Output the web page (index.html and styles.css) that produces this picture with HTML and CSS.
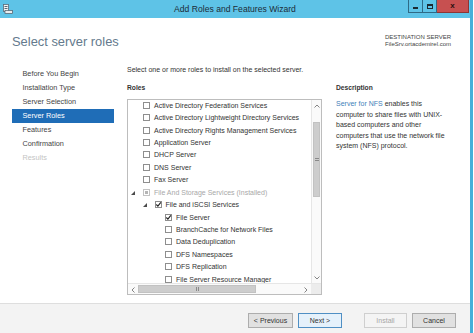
FILE: index.html
```html
<!DOCTYPE html>
<html lang="en">
<head>
    <meta charset="UTF-8">
    <title>Add Roles and Features Wizard</title>
    <link rel="stylesheet" href="styles.css">
</head>
<body>
    <div class="window">
        <div class="titlebar">
            <div class="tb-left">
                <svg class="app-icon" width="10" height="10" viewBox="0 0 10 10">
                    <rect x="0.5" y="0.5" width="5" height="7" fill="#f4f4f4" stroke="#5a6b78" stroke-width="0.8"/>
                    <rect x="1.5" y="2" width="3" height="1" fill="#5a6b78"/>
                    <rect x="1.5" y="4" width="3" height="1" fill="#5a6b78"/>
                    <rect x="2" y="6.5" width="7.5" height="3" fill="#e9edf0" stroke="#4a5a66" stroke-width="0.7"/>
                </svg>
            </div>
            <div class="title">Add Roles and Features Wizard</div>
            <div class="caption-buttons">
                <span class="cap cap-min"><i></i></span>
                <span class="cap cap-max"><i></i></span>
                <span class="cap cap-close">x</span>
            </div>
        </div>

        <div class="header">
            <h1>Select server roles</h1>
            <div class="dest">
                <div>DESTINATION SERVER</div>
                <div>FileSrv.ortacdemirel.com</div>
            </div>
        </div>

        <div class="main">
            <ul class="steps">
                <li>Before You Begin</li>
                <li>Installation Type</li>
                <li>Server Selection</li>
                <li class="active">Server Roles</li>
                <li>Features</li>
                <li>Confirmation</li>
                <li class="disabled">Results</li>
            </ul>

            <div class="content">
                <p class="intro">Select one or more roles to install on the selected server.</p>
                <div class="columns">
                    <div class="roles">
                        <div class="label">Roles</div>
                        <div class="listbox">
                            <div class="list-area">
                                <div class="rows">
                                    <div class="row first"><span class="exp"></span><span class="cb"></span>Active Directory Federation Services</div>
                                    <div class="row"><span class="exp"></span><span class="cb"></span>Active Directory Lightweight Directory Services</div>
                                    <div class="row"><span class="exp"></span><span class="cb"></span>Active Directory Rights Management Services</div>
                                    <div class="row"><span class="exp"></span><span class="cb"></span>Application Server</div>
                                    <div class="row"><span class="exp"></span><span class="cb"></span>DHCP Server</div>
                                    <div class="row"><span class="exp"></span><span class="cb"></span>DNS Server</div>
                                    <div class="row"><span class="exp"></span><span class="cb"></span>Fax Server</div>
                                    <div class="row grayed"><span class="exp open"></span><span class="cb partial"></span>File And Storage Services (Installed)</div>
                                    <div class="row lvl2"><span class="exp open"></span><span class="cb checked"><svg width="7" height="7" viewBox="0 0 7 7"><polyline points="1.3,3.5 2.9,5.1 5.8,1.4" fill="none" stroke="#222" stroke-width="1.1"/></svg></span>File and iSCSI Services</div>
                                    <div class="row lvl3"><span class="exp"></span><span class="cb checked"><svg width="7" height="7" viewBox="0 0 7 7"><polyline points="1.3,3.5 2.9,5.1 5.8,1.4" fill="none" stroke="#222" stroke-width="1.1"/></svg></span>File Server</div>
                                    <div class="row lvl3"><span class="exp"></span><span class="cb"></span>BranchCache for Network Files</div>
                                    <div class="row lvl3"><span class="exp"></span><span class="cb"></span>Data Deduplication</div>
                                    <div class="row lvl3"><span class="exp"></span><span class="cb"></span>DFS Namespaces</div>
                                    <div class="row lvl3"><span class="exp"></span><span class="cb"></span>DFS Replication</div>
                                    <div class="row lvl3"><span class="exp"></span><span class="cb"></span>File Server Resource Manager</div>
                                </div>
                                <div class="vscroll">
                                    <div class="sb-arrow">
                                        <svg width="6" height="4" viewBox="0 0 6 4"><polyline points="0.5,3.5 3,1 5.5,3.5" fill="none" stroke="#777" stroke-width="0.9"/></svg>
                                    </div>
                                    <div class="sb-track">
                                        <div class="sb-thumb vthumb"><span class="grip"></span></div>
                                    </div>
                                    <div class="sb-arrow">
                                        <svg width="6" height="4" viewBox="0 0 6 4"><polyline points="0.5,0.5 3,3 5.5,0.5" fill="none" stroke="#777" stroke-width="0.9"/></svg>
                                    </div>
                                </div>
                            </div>
                            <div class="hscroll">
                                <div class="sb-arrow">
                                    <svg width="4" height="6" viewBox="0 0 4 6"><polyline points="3.5,0.5 1,3 3.5,5.5" fill="none" stroke="#777" stroke-width="0.9"/></svg>
                                </div>
                                <div class="sb-track htrack">
                                    <div class="sb-thumb hthumb"><span class="grip"></span></div>
                                    <div class="sb-arrow">
                                        <svg width="4" height="6" viewBox="0 0 4 6"><polyline points="0.5,0.5 3,3 0.5,5.5" fill="none" stroke="#777" stroke-width="0.9"/></svg>
                                    </div>
                                </div>
                                <div class="sb-corner"></div>
                            </div>
                        </div>
                    </div>

                    <div class="desc">
                        <div class="label">Description</div>
                        <p><a href="#">Server for NFS</a> enables this<br>computer to share files with UNIX-<br>based computers and other<br>computers that use the network file<br>system (NFS) protocol.</p>
                    </div>
                </div>
            </div>
        </div>

        <div class="footer">
            <button class="btn btn-prev">&lt; Previous</button>
            <button class="btn btn-next">Next &gt;</button>
            <button class="btn btn-install" disabled>Install</button>
            <button class="btn btn-cancel">Cancel</button>
        </div>
    </div>
</body>
</html>
```

FILE: styles.css
```css
* {
    box-sizing: border-box;
}
body {
    margin: 0;
    background: #fff;
    font-family: "Liberation Sans", Arial, sans-serif;
    color: #333;
}
.window {
    width: 473px;
    height: 333px;
    border-right: 3px solid #45afd9;
    background: #fff;
    display: flex;
    flex-direction: column;
}

/* title bar */
.titlebar {
    height: 18px;
    background: #5ec3e7;
    display: grid;
    grid-template-columns: 1fr auto 1fr;
    align-items: start;
}
.tb-left {
    padding: 4px 0 0 3px;
}
.app-icon {
    display: block;
}
.title {
    font-size: 8.6px;
    line-height: 18px;
    color: #1c2c38;
}
.caption-buttons {
    display: flex;
    justify-content: flex-end;
    margin-right: 1px;
}
.cap {
    height: 13px;
    border: 1px solid #2f6a86;
    border-top: none;
    display: flex;
    align-items: center;
    justify-content: center;
}
.cap-min {
    width: 14px;
    border-right: none;
}
.cap-min i {
    width: 5px;
    height: 2px;
    background: #1b2a33;
    margin-top: 4px;
}
.cap-max {
    width: 15px;
}
.cap-max i {
    width: 6px;
    height: 5px;
    border: 1px solid #1b2a33;
    border-top-width: 2px;
}
.cap-close {
    width: 32px;
    background: #c75050;
    border-color: #8c3535;
    border-left: none;
    color: #2a0f0f;
    font-weight: bold;
    font-size: 8px;
    line-height: 12px;
}

/* header */
.header {
    height: 44px;
    display: flex;
    justify-content: space-between;
    align-items: flex-start;
    padding: 15px 19px 0 12px;
}
.header h1 {
    margin: 1px 0 0;
    font-size: 12.9px;
    font-weight: normal;
    line-height: 16px;
    color: #647a8d;
}
.dest {
    text-align: right;
    font-size: 6px;
    line-height: 7px;
    color: #444;
    margin-top: 0.5px;
}

/* body */
.main {
    flex: 1;
    display: flex;
}
.steps {
    width: 127px;
    margin: 0;
    padding: 5px 0 0 12px;
    list-style: none;
}
.steps li {
    width: 102px;
    height: 14px;
    line-height: 14px;
    padding-left: 10.5px;
    font-size: 7.3px;
    color: #444;
}
.steps li.active {
    background: #1f6db7;
    color: #fff;
}
.steps li.disabled {
    color: #c4c4c4;
}
.content {
    flex: 1;
    padding-top: 2px;
}
.intro {
    margin: 0;
    font-size: 7px;
    line-height: 12px;
}
.columns {
    display: flex;
    gap: 14px;
    margin-top: 6px;
}
.roles {
    width: 195px;
}
.label {
    font-size: 6.7px;
    font-weight: bold;
    line-height: 12px;
    color: #333;
}

/* list box */
.listbox {
    margin-top: 5px;
    height: 196px;
    border: 1px solid #bdbdbd;
    display: flex;
    flex-direction: column;
}
.list-area {
    flex: 1;
    min-height: 0;
    display: flex;
}
.rows {
    flex: 1;
    overflow: hidden;
}
.row {
    height: 12.43px;
    display: flex;
    align-items: center;
    padding-left: 3px;
    font-size: 7px;
    white-space: nowrap;
    color: #333;
}
.row.first {
    margin-top: -1px;
}
.row.lvl2 {
    padding-left: 14.5px;
}
.row.lvl3 {
    padding-left: 25px;
}
.row.grayed {
    color: #a8a8a8;
}
.exp {
    width: 12px;
    height: 7px;
    display: flex;
    align-items: flex-end;
}
.exp.open::before {
    content: "";
    width: 0;
    height: 0;
    margin-bottom: 1px;
    border-left: 4px solid transparent;
    border-bottom: 4px solid #4a4a4a;
}
.cb {
    width: 7px;
    height: 7px;
    border: 1px solid #8e8e8e;
    background: #fff;
    margin-right: 4px;
    display: flex;
    align-items: center;
    justify-content: center;
}
.cb svg {
    display: block;
    margin: -1px;
}
.cb.partial {
    border-color: #c3c3c3;
}
.cb.partial::before {
    content: "";
    width: 3px;
    height: 3px;
    background: #b5b5b5;
}

/* scroll bars */
.vscroll {
    width: 10px;
    display: flex;
    flex-direction: column;
    background: #fafafa;
    border-left: 1px solid #e6e6e6;
}
.sb-arrow {
    flex: none;
    width: 10px;
    height: 11px;
    display: flex;
    align-items: center;
    justify-content: center;
}
.sb-track {
    flex: 1;
    padding-top: 10.7px;
}
.sb-thumb {
    background: #cdcdcd;
    border: 1px solid #c2c2c2;
    display: flex;
    align-items: center;
    justify-content: center;
}
.vthumb {
    height: 75px;
    margin: 0 1px;
}
.grip {
    width: 4px;
    height: 3px;
    border-top: 1px solid #8a8a8a;
    border-bottom: 1px solid #8a8a8a;
}
.hscroll {
    height: 11px;
    display: flex;
    background: #fafafa;
    border-top: 1px solid #e6e6e6;
}
.htrack {
    padding: 0;
    display: flex;
    justify-content: space-between;
}
.hthumb {
    width: 118px;
    margin: 1px 0;
}
.hthumb .grip {
    width: 3px;
    height: 4px;
    border: none;
    border-left: 1px solid #8a8a8a;
    border-right: 1px solid #8a8a8a;
}
.sb-corner {
    width: 10px;
    background: #ececec;
}

/* description */
.desc {
    flex: 1;
}
.desc p {
    margin: 5px 0 0;
    font-size: 7px;
    line-height: 10.5px;
    color: #333;
}
.desc a {
    color: #3f7fb8;
    text-decoration: none;
}

/* footer */
.footer {
    height: 30px;
    border-top: 1px solid #dedede;
    background: #f3f3f3;
    display: flex;
    justify-content: flex-end;
    align-items: flex-start;
    padding: 9px 14px 0 0;
}
.btn {
    height: 15px;
    padding: 0;
    font-family: inherit;
    font-size: 7px;
    color: #333;
    background: #e1e1e1;
    border: 1px solid #adadad;
}
.btn-prev {
    width: 45px;
}
.btn-next {
    width: 44px;
    margin-left: 5px;
    background: #e5f1fb;
    border-color: #4f8fc4;
}
.btn-install {
    width: 43px;
    margin-left: 22px;
    color: #a6a6a6;
    background: #f4f4f4;
    border-color: #cfcfcf;
}
.btn-cancel {
    width: 44px;
    margin-left: 5px;
}
```
